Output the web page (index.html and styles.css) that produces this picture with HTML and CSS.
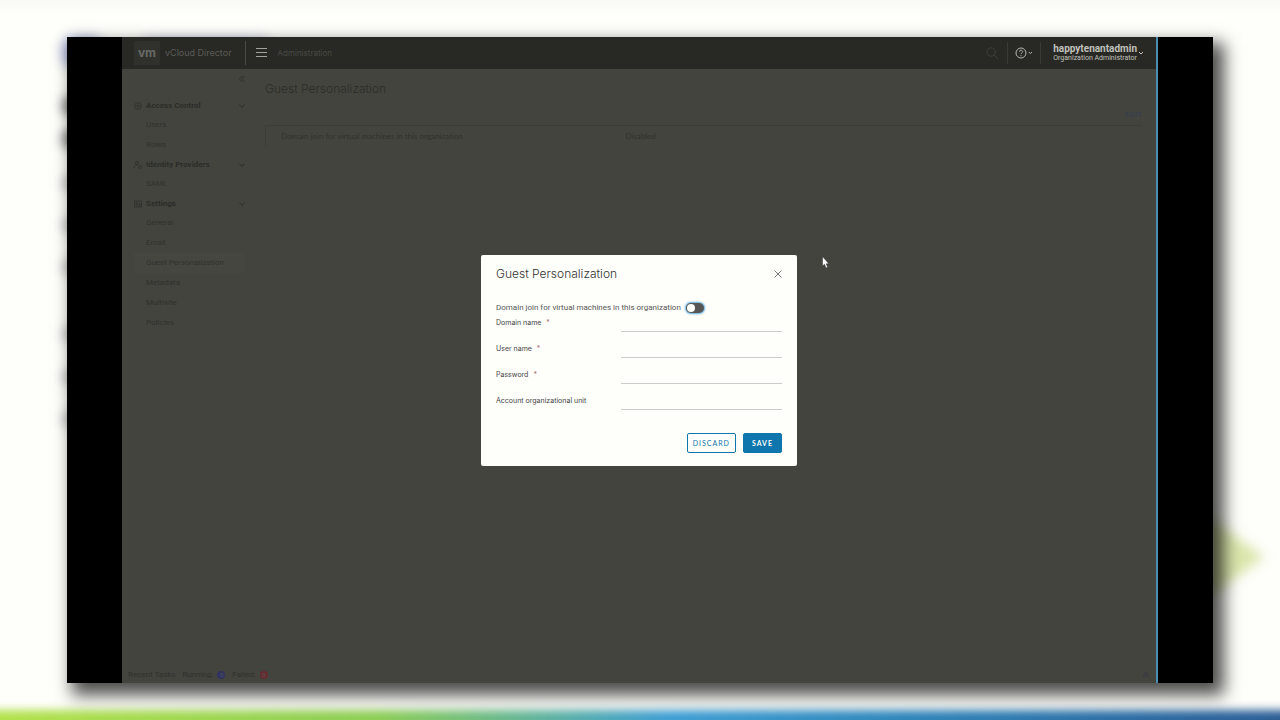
FILE: index.html
```html
<!DOCTYPE html>
<html lang="en">
  <head>
    <meta charset="UTF-8" />
    <title>vCloud Director - Guest Personalization</title>
    <meta name="viewport" content="width=device-width, initial-scale=1.0" />
    <link rel="stylesheet" href="styles.css">
  </head>
  <body>
    <div class="backdrop">
      <span class="smudge smudge-title"></span>
      <span class="smudge smudge-title-end"></span>
      <span class="smudge smudge-heading"></span>
      <span class="smudge smudge-heading second"></span>
      <span class="smudge smudge-line line-1"></span>
      <span class="smudge smudge-line line-2"></span>
      <span class="smudge smudge-line line-3"></span>
      <span class="smudge smudge-line line-4"></span>
      <span class="smudge smudge-line line-5"></span>
      <span class="smudge smudge-line line-6"></span>
      <span class="arrow"></span>
      <span class="strip"></span>
    </div>

    <div class="stage">
      <div class="app">
        <header class="header">
          <div class="brand">
            <span class="logo">vm</span>
            <span class="product">vCloud Director</span>
          </div>
          <button class="menu-button" type="button" aria-label="Menu">
            <svg width="11" height="10" viewBox="0 0 11 10"><path d="M0 .500h11M0 4.500h11M0 8.500h11" stroke="currentColor" stroke-width="1" fill="none" /></svg>
          </button>
          <a class="section" href="#">Administration</a>
          <div class="header-actions">
            <button class="search-button" type="button" aria-label="Search">
              <svg width="14" height="14" viewBox="0 0 14 14" fill="none" stroke="currentColor"><circle cx="6" cy="6" r="4.2" /><path d="M9 9l4 4" /></svg>
            </button>
            <button class="help-button" type="button" aria-label="Help">
              <svg width="18" height="12" viewBox="0 0 18 12" fill="none" stroke="currentColor"><circle cx="6" cy="6" r="5" /><path d="M4.4 4.8c0-2.1 3.2-2.1 3.2-.1 0 1.2-1.6 1.2-1.6 2.5M6 8.2v1M13.800 5l1.600 1.600L17 5" /></svg>
            </button>
            <button class="user-button" type="button">
              <span class="user-text">
                <span class="user-name">happytenantadmin</span>
                <span class="user-role">Organization Administrator</span>
              </span>
              <svg width="4" height="4" viewBox="0 0 4 4" fill="none" stroke="currentColor"><path d="M0 1l2 2 2-2" /></svg>
            </button>
          </div>
        </header>

        <div class="body">
          <nav class="sidebar">
            <button class="collapse" type="button" aria-label="Collapse">
              <svg width="6" height="6" viewBox="0 0 6 6" fill="none" stroke="currentColor"><path d="M3 0L.5 3 3 6M5.500 0L3 3l2.500 3" /></svg>
            </button>
            <div class="group">
              <svg width="8" height="8" viewBox="0 0 8 8" fill="none" stroke="currentColor" stroke-width=".7"><circle cx="4" cy="4" r="3.300" /><circle cx="4" cy="4" r="1.200" /></svg>
              <span>Access Control</span>
              <svg class="chevron" width="6" height="4" viewBox="0 0 6 4" fill="none" stroke="currentColor"><path d="M.3.500L3 3.300 5.700.500" /></svg>
            </div>
            <a href="#">Users</a>
            <a href="#">Roles</a>
            <div class="group">
              <svg width="8" height="8" viewBox="0 0 8 8" fill="none" stroke="currentColor" stroke-width=".7"><circle cx="3" cy="2" r="1.500" /><path d="M.5 7.500V5l1.500-1h2" /><circle cx="6" cy="6" r="1.500" /></svg>
              <span>Identity Providers</span>
              <svg class="chevron" width="6" height="4" viewBox="0 0 6 4" fill="none" stroke="currentColor"><path d="M.3.500L3 3.300 5.700.500" /></svg>
            </div>
            <a href="#">SAML</a>
            <div class="group">
              <svg width="8" height="8" viewBox="0 0 8 8" fill="none" stroke="currentColor" stroke-width=".7"><rect x=".5" y="1" width="7" height="6" /><path d="M.5 4h7M3 1v6M5.500 4v3" /></svg>
              <span>Settings</span>
              <svg class="chevron" width="6" height="4" viewBox="0 0 6 4" fill="none" stroke="currentColor"><path d="M.3.500L3 3.300 5.700.500" /></svg>
            </div>
            <a href="#">General</a>
            <a href="#">Email</a>
            <a class="active" href="#">Guest Personalization</a>
            <a href="#">Metadata</a>
            <a href="#">Multisite</a>
            <a href="#">Policies</a>
          </nav>

          <main class="content">
            <h1>Guest Personalization</h1>
            <button class="edit" type="button">EDIT</button>
            <dl class="setting">
              <dt>Domain join for virtual machines in this organization</dt>
              <dd>Disabled</dd>
            </dl>
          </main>
        </div>

        <footer class="tasks">
          <span>Recent Tasks</span>
          <span class="status">Running: <b class="badge blue">0</b></span>
          <span class="status">Failed: <b class="badge red">0</b></span>
          <svg class="expand" width="6" height="6" viewBox="0 0 6 6" fill="none" stroke="currentColor"><path d="M0 3l3-2.500L6 3M0 5.500L3 3l3 2.500" /></svg>
        </footer>

        <div class="modal-layer">
          <form class="modal" role="dialog" aria-labelledby="modal-title">
            <div class="modal-header">
              <h2 id="modal-title">Guest Personalization</h2>
              <button class="close" type="button" aria-label="Close">
                <svg width="8" height="8" viewBox="0 0 8 8" fill="none" stroke="currentColor" stroke-width=".8"><path d="M.5.500l7 7M7.500.500l-7 7" /></svg>
              </button>
            </div>
            <div class="toggle-row">
              <label for="domain-join">Domain join for virtual machines in this organization</label>
              <input type="checkbox" id="domain-join" class="toggle" />
            </div>
            <div class="field">
              <label for="domain">Domain name <i>*</i></label>
              <input type="text" id="domain" />
            </div>
            <div class="field">
              <label for="user">User name <i>*</i></label>
              <input type="text" id="user" />
            </div>
            <div class="field">
              <label for="password">Password <i>*</i></label>
              <input type="password" id="password" />
            </div>
            <div class="field">
              <label for="unit">Account organizational unit</label>
              <input type="text" id="unit" />
            </div>
            <div class="modal-footer">
              <button class="btn" type="button">DISCARD</button>
              <button class="btn primary" type="submit">SAVE</button>
            </div>
          </form>
        </div>
      </div>
      <svg class="cursor" width="7" height="13" viewBox="0 0 7 13"><path d="M.5.500v9.500l2-1.800L4 12l1.700-.7-1.500-3.500h2.600z" fill="#fff" stroke="#333" stroke-width=".5" /></svg>
    </div>
  </body>
</html>
```

FILE: styles.css
```css
* {
  box-sizing: border-box;
}

body {
  position: relative;
  display: flex;
  min-height: 100vh;
  margin: 0;
  padding: 37px 67px;
  overflow: hidden;
  background: #fefefa;
  font-family: Roboto, "Liberation Sans", sans-serif;
  font-size: 8px;
  line-height: 12px;
}

button {
  padding: 0;
  border: none;
  background: none;
  color: inherit;
  font: inherit;
}

a {
  color: inherit;
  text-decoration: none;
}

svg {
  display: block;
  flex: none;
}

h1,
h2 {
  margin: 0;
  font-family: Inter, "Liberation Sans", sans-serif;
  font-size: 12px;
  font-weight: 300;
  line-height: 16px;
}

/* blurred slide behind the recording */
.backdrop {
  position: absolute;
  inset: 0;
  overflow: hidden;
  background: linear-gradient(#f8f9f5, #fefefa 14px);
}

.smudge {
  position: absolute;
  left: 62px;
  width: 40px;
  height: 20px;
  border-radius: 10px;
  background: #bbb;
  filter: blur(6px);
}

.smudge-title {
  top: 37px;
  height: 30px;
  background: #a9b0d8;
}

.smudge-title-end {
  top: 39px;
  left: 140px;
  width: 130px;
  background: #c0c4e4;
}

.smudge-heading {
  top: 96px;
  background: #777;
}

.smudge-heading.second {
  top: 129px;
}

.smudge-line {
  height: 14px;
}

.line-1 {
  top: 176px;
}

.line-2 {
  top: 218px;
}

.line-3 {
  top: 260px;
}

.line-4 {
  top: 327px;
}

.line-5 {
  top: 370px;
}

.line-6 {
  top: 412px;
}

.arrow {
  position: absolute;
  top: 513px;
  right: 16px;
  border: 44px solid transparent;
  border-right: none;
  border-left: 60px solid #dbe6ac;
  filter: blur(6px);
}

.strip {
  position: absolute;
  right: -20px;
  bottom: -12px;
  left: -20px;
  height: 22px;
  background: linear-gradient(90deg, #b5e34c, #8dce55 30%, #3f9fd4 52%, #2f86bb 70%, #2c5c94);
  filter: blur(4px);
}

.stage {
  position: relative;
  display: flex;
  flex: 1;
  padding: 0 55px;
  background: #000;
  box-shadow: 8px 9px 16px 3px rgba(0, 0, 0, 0.7);
}

.app {
  position: relative;
  display: flex;
  flex: 1;
  flex-direction: column;
  border-right: 2px solid #4a8db0;
  background: #43443e;
  color: #30312d;
}

.header {
  display: flex;
  align-items: center;
  height: 32px;
  padding-left: 12px;
  background: #282924;
  color: #484944;
}

.brand {
  display: flex;
  align-items: center;
  gap: 5px;
  height: 24px;
  padding-right: 13px;
  border-right: 1px solid #484944;
  font-family: Inter, "Liberation Sans", sans-serif;
}

.logo {
  width: 26px;
  height: 24px;
  background: #30312d;
  color: #686965;
  font-size: 12px;
  font-weight: 700;
  line-height: 24px;
  text-align: center;
}

.product {
  color: #5b5c58;
  font-size: 9px;
}

.menu-button {
  margin: 0 11px 0 10px;
  color: #a2a39f;
}

.section {
  font-family: Inter, "Liberation Sans", sans-serif;
}

.header-actions {
  display: flex;
  align-items: center;
  margin-left: auto;
}

.search-button {
  padding-right: 8px;
  color: #3d3e39;
}

.help-button {
  height: 22px;
  padding: 0 7px;
  border-right: 1px solid #393a35;
  border-left: 1px solid #393a35;
  color: #b5b6b2;
}

.user-button {
  display: flex;
  align-items: center;
  gap: 2px;
  padding: 0 13px 0 12px;
  color: #c0c1bd;
}

.user-text {
  display: flex;
  flex-direction: column;
  align-items: center;
}

.user-name {
  font-size: 10px;
  font-weight: 700;
  line-height: 11px;
}

.user-role {
  font-size: 7px;
  line-height: 9px;
}

.body {
  display: flex;
  flex: 1;
}

.sidebar {
  display: flex;
  flex-direction: column;
  width: 131px;
  padding: 7px 8px 0 12px;
}

.collapse {
  align-self: flex-end;
  height: 6px;
  margin-bottom: 14px;
}

.group {
  display: flex;
  align-items: center;
  gap: 4px;
  height: 19px;
  color: #2b2c28;
  font-weight: 700;
}

.chevron {
  margin-left: auto;
}

.sidebar a {
  padding-left: 12px;
  line-height: 20px;
}

.sidebar .active {
  background: #454640;
}

.content {
  display: flex;
  flex: 1;
  flex-direction: column;
  padding: 12px 14px 0 12px;
}

.content h1 {
  color: #2b2c28;
}

.edit {
  align-self: flex-end;
  margin: 12px 0 4px;
  color: #333d50;
}

.setting {
  display: flex;
  margin: 0;
  padding: 4px 0 4px 15px;
  border-top: 1px solid #3c3d38;
  border-left: 1px solid #3c3d38;
  font-family: Lato, "Liberation Sans", sans-serif;
}

.setting dt {
  width: 40%;
}

.setting dd {
  margin: 0;
}

.tasks {
  display: flex;
  align-items: center;
  gap: 7px;
  height: 16px;
  padding: 0 7px 0 6px;
}

.status {
  display: flex;
  align-items: center;
  gap: 4px;
}

.badge {
  width: 8px;
  height: 8px;
  border-radius: 50%;
  color: #5a5562;
  font-size: 6px;
  font-weight: 400;
  line-height: 8px;
  text-align: center;
}

.blue {
  background: #303360;
}

.red {
  background: #652b2d;
}

.expand {
  margin-left: auto;
  color: #353747;
}

.modal-layer {
  position: absolute;
  inset: 0;
  display: flex;
  align-items: center;
  justify-content: center;
}

.modal {
  width: 316px;
  padding: 11px 15px 13px;
  border-radius: 2px;
  background: #fefefa;
  color: #565656;
}

.modal-header {
  display: flex;
  align-items: center;
  justify-content: space-between;
  margin-bottom: 20px;
}

.modal-header h2 {
  color: #333;
}

.close {
  padding: 4px 0;
}

.toggle-row {
  display: flex;
  align-items: center;
  gap: 5px;
  margin-bottom: 1px;
}

.toggle {
  width: 18px;
  height: 10px;
  margin: 0;
  padding: 1px;
  border-radius: 5px;
  background: #565656;
  box-shadow: 0 0 2px 1px #5aa9dc;
  appearance: none;
}

.toggle::before {
  content: "";
  display: block;
  width: 8px;
  height: 8px;
  border-radius: 50%;
  background: #fefefa;
}

.toggle:checked::before {
  margin-left: auto;
}

.field {
  display: flex;
  height: 26px;
  padding-top: 2px;
  color: #444;
  font-family: Inter, "Liberation Sans", sans-serif;
  font-size: 7px;
}

.field label {
  width: 125px;
}

.field i {
  margin-left: 3px;
  color: #a77;
  font-style: normal;
}

.field input {
  flex: 1;
  min-width: 0;
  height: 15px;
  padding: 0 3px;
  border: none;
  border-bottom: 1px solid #ccc;
  outline: none;
  background: transparent;
  font: inherit;
}

.modal-footer {
  display: flex;
  justify-content: flex-end;
  gap: 7px;
  margin-top: 14px;
}

.btn {
  height: 20px;
  padding: 0 5px;
  border: 1px solid #0f75ad;
  border-radius: 2px;
  color: #0f75ad;
  font-family: Lato, "Liberation Sans", sans-serif;
  font-size: 7px;
  letter-spacing: 1px;
}

.primary {
  padding: 0 8px;
  background: #0f75ad;
  color: #fefefa;
  font-weight: 700;
}

.cursor {
  position: absolute;
  top: 219px;
  left: 755px;
}
```
